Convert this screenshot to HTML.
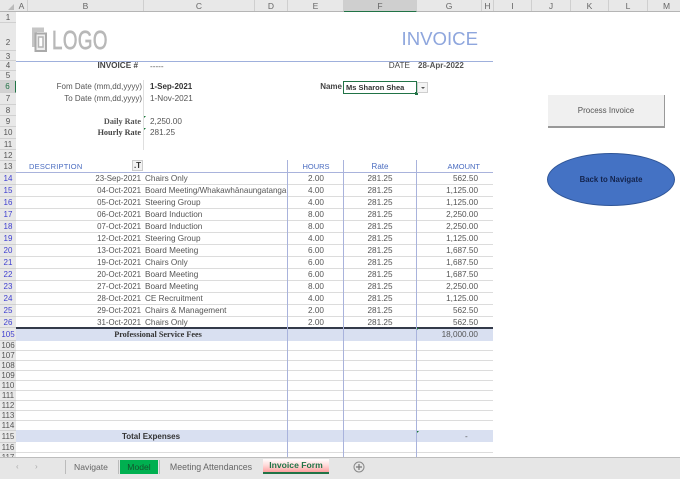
<!DOCTYPE html>
<html><head><meta charset="utf-8"><style>
html,body{margin:0;padding:0;background:#fff}
#p{position:relative;width:680px;height:479px;overflow:hidden;background:#fff;font-family:"Liberation Sans",sans-serif;font-size:8.2px;color:#555;filter:blur(.3px)}
#p div{position:absolute;white-space:nowrap}
.t{height:12px;line-height:12px}
.r{text-align:right}
.c{text-align:center}
.b{font-weight:bold}
.d{font-size:7.9px}
.col{top:0;height:11px;line-height:12px;text-align:center;color:#666;font-size:8.5px;border-right:1px solid #cfcfcf;box-sizing:border-box}
.rn{left:0;width:16px;text-align:center;color:#555;font-size:8px;background:#e8e8e8;border-bottom:1px solid #d0d0d0;box-sizing:border-box}
.blue{color:#3f3fd0}
.hl{left:16px;width:477px;height:1px;background:#dcdcdc}
.vl{width:1px;background:#a9b3dc}
.tri{width:0;height:0;border-top:3px solid #1a7a3a;border-right:3px solid transparent}
.h{color:#4a6cc0;font-size:7.5px}
</style></head><body><div id="p">

<div style="left:0;top:0;width:680px;height:12px;background:#e8e8e8;border-bottom:1px solid #b5b5b5;box-sizing:border-box"></div>
<div class="col" style="left:16px;width:12px">A</div>
<div class="col" style="left:28px;width:116px">B</div>
<div class="col" style="left:144px;width:111px">C</div>
<div class="col" style="left:255px;width:33px">D</div>
<div class="col" style="left:288px;width:56px">E</div>
<div class="col" style="left:344px;width:73px;background:#cfcfcf;border-bottom:1px solid #217346;height:12px">F</div>
<div class="col" style="left:417px;width:65px">G</div>
<div class="col" style="left:482px;width:12px">H</div>
<div class="col" style="left:494px;width:38px">I</div>
<div class="col" style="left:532px;width:39px">J</div>
<div class="col" style="left:571px;width:38px">K</div>
<div class="col" style="left:609px;width:39px">L</div>
<div class="col" style="left:648px;width:38px">M</div>
<div style="left:8px;top:4px;width:0;height:0;border-bottom:6px solid #bbb;border-left:6px solid transparent"></div>

<div style="left:0;top:12px;width:16px;height:446px;background:#e8e8e8;border-right:1px solid #b5b5b5;box-sizing:border-box"></div>
<div class="rn" style="top:12px;height:11px;line-height:11px">1</div>
<div class="rn" style="top:23px;height:28px;line-height:40px">2</div>
<div class="rn" style="top:51px;height:10px;line-height:11px">3</div>
<div class="rn" style="top:61px;height:10px;line-height:10px">4</div>
<div class="rn" style="top:71px;height:10px;line-height:10px">5</div>
<div class="rn" style="top:81px;height:12px;line-height:12px;background:#d2d2d2;color:#217346;border-right:1px solid #217346;width:16px">6</div>
<div class="rn" style="top:93px;height:12px;line-height:12px">7</div>
<div class="rn" style="top:105px;height:11px;line-height:11px">8</div>
<div class="rn" style="top:116px;height:11px;line-height:11px">9</div>
<div class="rn" style="top:127px;height:12px;line-height:12px">10</div>
<div class="rn" style="top:139px;height:11px;line-height:11px">11</div>
<div class="rn" style="top:150px;height:11px;line-height:11px">12</div>
<div class="rn" style="top:161px;height:12px;line-height:12px">13</div>
<div class="rn blue" style="top:173px;height:12px;line-height:12px">14</div>
<div class="rn blue" style="top:185px;height:12px;line-height:12px">15</div>
<div class="rn blue" style="top:197px;height:12px;line-height:12px">16</div>
<div class="rn blue" style="top:209px;height:12px;line-height:12px">17</div>
<div class="rn blue" style="top:221px;height:12px;line-height:12px">18</div>
<div class="rn blue" style="top:233px;height:12px;line-height:12px">19</div>
<div class="rn blue" style="top:245px;height:12px;line-height:12px">20</div>
<div class="rn blue" style="top:257px;height:12px;line-height:12px">21</div>
<div class="rn blue" style="top:269px;height:12px;line-height:12px">22</div>
<div class="rn blue" style="top:281px;height:12px;line-height:12px">23</div>
<div class="rn blue" style="top:293px;height:12px;line-height:12px">24</div>
<div class="rn blue" style="top:305px;height:12px;line-height:12px">25</div>
<div class="rn blue" style="top:317px;height:11px;line-height:11px">26</div>
<div class="rn blue" style="top:328px;height:13px;line-height:13px">105</div>
<div class="rn" style="top:341px;height:10px;line-height:10px">106</div>
<div class="rn" style="top:351px;height:10px;line-height:10px">107</div>
<div class="rn" style="top:361px;height:10px;line-height:10px">108</div>
<div class="rn" style="top:371px;height:10px;line-height:10px">109</div>
<div class="rn" style="top:381px;height:10px;line-height:10px">110</div>
<div class="rn" style="top:391px;height:10px;line-height:10px">111</div>
<div class="rn" style="top:401px;height:10px;line-height:10px">112</div>
<div class="rn" style="top:411px;height:10px;line-height:10px">113</div>
<div class="rn" style="top:421px;height:10px;line-height:10px">114</div>
<div class="rn" style="top:431px;height:12px;line-height:12px">115</div>
<div class="rn" style="top:443px;height:10px;line-height:10px">116</div>
<div class="rn" style="top:453px;height:5px;line-height:9px">117</div>

<!-- logo -->
<svg style="position:absolute;left:31px;top:26px" width="17" height="27" viewBox="0 0 17 27"><path d="M1 1.5H13V6H6V21H1Z" fill="#c6c6c6"/><rect x="4.5" y="7.5" width="10.5" height="17.5" fill="#eee" stroke="#aaa" stroke-width="2"/><rect x="7.5" y="11" width="4.5" height="10" fill="#fff" stroke="#b4b4b4" stroke-width="1.5"/></svg>
<div style="left:52px;top:26px;height:28px;line-height:28px;font-size:26px;color:#b8b8b8;letter-spacing:.6px;-webkit-text-stroke:.7px #b8b8b8;transform:scaleX(.72);transform-origin:left center">LOGO</div>
<div style="left:340px;width:138px;top:27px;height:24px;line-height:24px;text-align:right;font-size:18.6px;color:#8ea6dd">INVOICE</div>
<div style="left:16px;top:61px;width:477px;height:1px;background:#9fb0dc"></div>

<div class="t r b" style="left:40px;width:98px;top:60px;color:#444">INVOICE #</div>
<div class="t" style="left:150px;top:61px">-----</div>
<div class="t r" style="left:360px;width:50px;top:60px;color:#444">DATE</div>
<div class="t b" style="left:418px;top:60px;width:68px;color:#555;font-size:8px">28-Apr-2022</div>

<div class="t r" style="left:20px;width:122px;top:81px;font-size:8px">Fom Date (mm,dd,yyyy)</div>
<div class="t r" style="left:20px;width:122px;top:93px;font-size:8px">To Date (mm,dd,yyyy)</div>
<div class="t b" style="left:150px;top:81px;color:#333;font-size:8px">1-Sep-2021</div>
<div class="t" style="left:150px;top:93px">1-Nov-2021</div>
<div class="t r b" style="left:320px;width:22px;top:81px;color:#444;font-size:8px">Name</div>
<div style="left:343px;top:81px;width:74px;height:13px;border:1px solid #217346;box-sizing:border-box;line-height:12px;padding-left:2px;font-weight:bold;color:#333;font-size:7.5px;background:#fff">Ms Sharon Shea</div>
<div style="left:415px;top:92px;width:3px;height:3px;background:#217346"></div>
<div style="left:417px;top:82px;width:11px;height:11px;background:#f4f4f4;border:1px solid #cfcfcf;box-sizing:border-box"></div>
<div style="left:421px;top:87px;width:0;height:0;border-top:2px solid #555;border-left:2px solid transparent;border-right:2px solid transparent"></div>

<div class="t r b" style="left:60px;width:81px;top:116px;font-family:'Liberation Serif',serif;color:#555">Daily Rate</div>
<div class="t r b" style="left:60px;width:81px;top:127px;font-family:'Liberation Serif',serif;color:#444">Hourly Rate</div>
<div class="t" style="left:150px;top:116px">2,250.00</div>
<div class="t" style="left:150px;top:127px">281.25</div>
<div class="tri" style="left:143px;top:116px"></div>
<div class="tri" style="left:143px;top:128px"></div>
<div class="vl" style="left:143px;top:80px;height:70px;background:#dfdfdf"></div>

<!-- table -->
<div class="t h" style="left:29px;top:161px;letter-spacing:.2px">DESCRIPTION</div>
<div style="left:132px;top:160px;width:11px;height:11px;background:#f2f2f2;border:1px solid #ccc;box-sizing:border-box;font-size:8px;line-height:10px;text-align:center;color:#333;font-weight:bold">.T</div>
<div class="t c h" style="left:288px;width:56px;top:161px">HOURS</div>
<div class="t c h" style="left:344px;width:72px;top:161px;font-size:8px">Rate</div>
<div class="t r h" style="left:417px;width:63px;top:161px">AMOUNT</div>

<div class="hl" style="top:172px;background:#a9b3dc"></div>
<div class="hl" style="top:184px"></div><div class="hl" style="top:196px"></div><div class="hl" style="top:208px"></div><div class="hl" style="top:220px"></div><div class="hl" style="top:232px"></div><div class="hl" style="top:244px"></div><div class="hl" style="top:256px"></div><div class="hl" style="top:268px"></div><div class="hl" style="top:280px"></div><div class="hl" style="top:292px"></div><div class="hl" style="top:304px"></div><div class="hl" style="top:316px"></div>
<div style="left:16px;top:328px;width:477px;height:13px;background:#d9e0f1"></div>
<div style="left:16px;top:327px;width:477px;height:2px;background:#333a4a"></div>
<div class="hl" style="top:350px"></div><div class="hl" style="top:360px"></div><div class="hl" style="top:370px"></div><div class="hl" style="top:380px"></div><div class="hl" style="top:390px"></div><div class="hl" style="top:400px"></div><div class="hl" style="top:410px"></div><div class="hl" style="top:420px"></div>
<div style="left:16px;top:430px;width:477px;height:12px;background:#d9e0f1"></div>
<div class="hl" style="top:452px"></div>

<div class="t r d" style="left:30px;width:111px;top:172.5px">23-Sep-2021</div><div class="t" style="left:145px;top:172.5px">Chairs Only</div>
<div class="t r d" style="left:30px;width:111px;top:184.5px">04-Oct-2021</div><div class="t" style="left:145px;top:184.5px;font-size:8.05px">Board Meeting/Whakawhānaungatanga</div>
<div class="t r d" style="left:30px;width:111px;top:196.5px">05-Oct-2021</div><div class="t" style="left:145px;top:196.5px">Steering Group</div>
<div class="t r d" style="left:30px;width:111px;top:208.5px">06-Oct-2021</div><div class="t" style="left:145px;top:208.5px">Board Induction</div>
<div class="t r d" style="left:30px;width:111px;top:220.5px">07-Oct-2021</div><div class="t" style="left:145px;top:220.5px">Board Induction</div>
<div class="t r d" style="left:30px;width:111px;top:232.5px">12-Oct-2021</div><div class="t" style="left:145px;top:232.5px">Steering Group</div>
<div class="t r d" style="left:30px;width:111px;top:244.5px">13-Oct-2021</div><div class="t" style="left:145px;top:244.5px">Board Meeting</div>
<div class="t r d" style="left:30px;width:111px;top:256.5px">19-Oct-2021</div><div class="t" style="left:145px;top:256.5px">Chairs Only</div>
<div class="t r d" style="left:30px;width:111px;top:268.5px">20-Oct-2021</div><div class="t" style="left:145px;top:268.5px">Board Meeting</div>
<div class="t r d" style="left:30px;width:111px;top:280.5px">27-Oct-2021</div><div class="t" style="left:145px;top:280.5px">Board Meeting</div>
<div class="t r d" style="left:30px;width:111px;top:292.5px">28-Oct-2021</div><div class="t" style="left:145px;top:292.5px">CE Recruitment</div>
<div class="t r d" style="left:30px;width:111px;top:304.5px">29-Oct-2021</div><div class="t" style="left:145px;top:304.5px">Chairs &amp; Management</div>
<div class="t r d" style="left:30px;width:111px;top:316.5px">31-Oct-2021</div><div class="t" style="left:145px;top:316.5px">Chairs Only</div>

<div class="t c" style="left:288px;width:56px;top:172.5px">2.00</div><div class="t c" style="left:344px;width:72px;top:172.5px">281.25</div><div class="t r" style="left:417px;width:61px;top:172.5px">562.50</div>
<div class="t c" style="left:288px;width:56px;top:184.5px">4.00</div><div class="t c" style="left:344px;width:72px;top:184.5px">281.25</div><div class="t r" style="left:417px;width:61px;top:184.5px">1,125.00</div>
<div class="t c" style="left:288px;width:56px;top:196.5px">4.00</div><div class="t c" style="left:344px;width:72px;top:196.5px">281.25</div><div class="t r" style="left:417px;width:61px;top:196.5px">1,125.00</div>
<div class="t c" style="left:288px;width:56px;top:208.5px">8.00</div><div class="t c" style="left:344px;width:72px;top:208.5px">281.25</div><div class="t r" style="left:417px;width:61px;top:208.5px">2,250.00</div>
<div class="t c" style="left:288px;width:56px;top:220.5px">8.00</div><div class="t c" style="left:344px;width:72px;top:220.5px">281.25</div><div class="t r" style="left:417px;width:61px;top:220.5px">2,250.00</div>
<div class="t c" style="left:288px;width:56px;top:232.5px">4.00</div><div class="t c" style="left:344px;width:72px;top:232.5px">281.25</div><div class="t r" style="left:417px;width:61px;top:232.5px">1,125.00</div>
<div class="t c" style="left:288px;width:56px;top:244.5px">6.00</div><div class="t c" style="left:344px;width:72px;top:244.5px">281.25</div><div class="t r" style="left:417px;width:61px;top:244.5px">1,687.50</div>
<div class="t c" style="left:288px;width:56px;top:256.5px">6.00</div><div class="t c" style="left:344px;width:72px;top:256.5px">281.25</div><div class="t r" style="left:417px;width:61px;top:256.5px">1,687.50</div>
<div class="t c" style="left:288px;width:56px;top:268.5px">6.00</div><div class="t c" style="left:344px;width:72px;top:268.5px">281.25</div><div class="t r" style="left:417px;width:61px;top:268.5px">1,687.50</div>
<div class="t c" style="left:288px;width:56px;top:280.5px">8.00</div><div class="t c" style="left:344px;width:72px;top:280.5px">281.25</div><div class="t r" style="left:417px;width:61px;top:280.5px">2,250.00</div>
<div class="t c" style="left:288px;width:56px;top:292.5px">4.00</div><div class="t c" style="left:344px;width:72px;top:292.5px">281.25</div><div class="t r" style="left:417px;width:61px;top:292.5px">1,125.00</div>
<div class="t c" style="left:288px;width:56px;top:304.5px">2.00</div><div class="t c" style="left:344px;width:72px;top:304.5px">281.25</div><div class="t r" style="left:417px;width:61px;top:304.5px">562.50</div>
<div class="t c" style="left:288px;width:56px;top:316.5px">2.00</div><div class="t c" style="left:344px;width:72px;top:316.5px">281.25</div><div class="t r" style="left:417px;width:61px;top:316.5px">562.50</div>

<div class="t c b" style="left:16px;width:284px;top:329px;font-family:'Liberation Serif',serif;color:#333">Professional Service Fees</div>
<div class="t r" style="left:417px;width:61px;top:329px">18,000.00</div>
<div class="tri" style="left:416px;top:328px"></div>
<div class="t c b" style="left:16px;width:270px;top:431px;color:#333;font-size:8px">Total Expenses</div>
<div class="t" style="left:465px;top:431px">-</div>
<div class="tri" style="left:416px;top:431px"></div>

<div class="vl" style="left:287px;top:160px;height:298px"></div>
<div class="vl" style="left:343px;top:160px;height:298px"></div>
<div class="vl" style="left:416px;top:160px;height:298px"></div>

<!-- buttons -->
<div style="left:548px;top:95px;width:117px;height:33px;background:#f0f0f0;border-right:1px solid #999;border-bottom:2px solid #999;box-sizing:border-box;text-align:center;line-height:32px;color:#555;font-size:8px">Process Invoice</div>
<div style="left:547px;top:153px;width:128px;height:53px;background:#4472c4;border:1px solid #2f5597;border-radius:50%;box-sizing:border-box;text-align:center;line-height:52px;color:#14244d;font-size:7.8px;font-weight:bold">Back to Navigate</div>

<!-- tabs -->
<div style="left:0;top:457px;width:680px;height:22px;background:#e6e6e6;border-top:1px solid #bdbdbd;box-sizing:border-box"></div>
<div style="left:16px;top:462px;color:#aaa;font-size:8px">‹</div>
<div style="left:35px;top:462px;color:#aaa;font-size:8px">›</div>
<div style="left:65px;top:460px;width:1px;height:14px;background:#bbb"></div>
<div style="left:118px;top:460px;width:1px;height:14px;background:#bbb"></div>
<div style="left:159px;top:460px;width:1px;height:14px;background:#bbb"></div>
<div style="left:66px;top:460px;width:50px;height:14px;line-height:14px;text-align:center;font-size:8.6px;color:#666">Navigate</div>
<div style="left:120px;top:460px;width:38px;height:14px;line-height:14px;text-align:center;font-size:8.6px;background:#00b050;color:#14532d">Model</div>
<div style="left:160px;top:460px;width:102px;height:14px;line-height:14px;text-align:center;font-size:8.8px;color:#666">Meeting Attendances</div>
<div style="left:263px;top:459px;width:66px;height:13px;line-height:13px;text-align:center;font-size:8.6px;font-weight:bold;color:#217346;background:linear-gradient(#fff 0%,#ffd9d9 50%,#ff9f9f 100%);border-bottom:2px solid #217346">Invoice Form</div>
<svg style="position:absolute;left:353px;top:461px" width="12" height="12" viewBox="0 0 12 12"><circle cx="6" cy="6" r="5" fill="none" stroke="#888" stroke-width="1"/><path d="M3 6H9M6 3V9" stroke="#777" stroke-width="1.2"/></svg>
</div></body></html>
